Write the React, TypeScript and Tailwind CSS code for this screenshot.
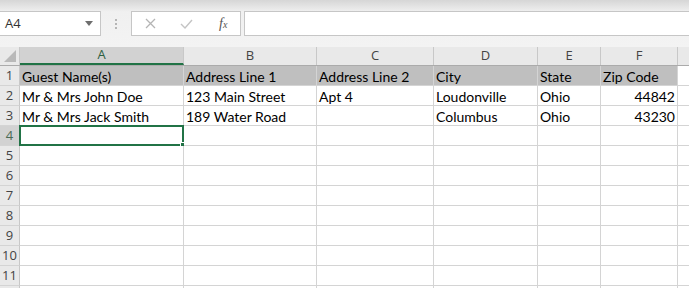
const cols = [
  { key: "A", w: "w-[164px]" },
  { key: "B", w: "w-[133px]" },
  { key: "C", w: "w-[117px]" },
  { key: "D", w: "w-[104px]" },
  { key: "E", w: "w-[63px]" },
  { key: "F", w: "w-[77px]" },
];

type Cell = { v: string; num?: boolean };

const data: Cell[][] = [
  [{ v: "Guest Name(s)" }, { v: "Address Line 1" }, { v: "Address Line 2" }, { v: "City" }, { v: "State" }, { v: "Zip Code" }],
  [{ v: "Mr & Mrs John Doe" }, { v: "123 Main Street" }, { v: "Apt 4" }, { v: "Loudonville" }, { v: "Ohio" }, { v: "44842", num: true }],
  [{ v: "Mr & Mrs Jack Smith" }, { v: "189 Water Road" }, { v: "" }, { v: "Columbus" }, { v: "Ohio" }, { v: "43230", num: true }],
];

function FormulaBar() {
  return (
    <div className="h-[47px] bg-gradient-to-b from-[#d6d6d6] via-[#f0f0f0] via-[25%] to-[#f3f3f3] flex flex-col">
      <div className="h-[11px]" />
      <div className="flex h-[25px] items-stretch">
        {/* name box */}
        <div className="w-[101px] bg-white border border-l-0 border-[#c6c6c6] flex items-center justify-between pl-[5px] pr-[7px]">
          <span className="text-[13px] text-[#333]" style={{ fontFamily: "'Open Sans', sans-serif" }}>A4</span>
          <svg width="8" height="5" viewBox="0 0 8 5"><path d="M0 0h8L4 5z" fill="#6e6e6e" /></svg>
        </div>
        <div className="w-[30px] flex flex-col items-center justify-center gap-[2px]">
          <span className="w-[2px] h-[2px] bg-[#b5b5b5]" />
          <span className="w-[2px] h-[2px] bg-[#b5b5b5]" />
          <span className="w-[2px] h-[2px] bg-[#b5b5b5]" />
        </div>
        {/* cancel / enter / fx */}
        <div className="w-[110px] bg-white border border-[#c6c6c6] flex items-center">
          <svg className="ml-[13px]" width="11" height="11" viewBox="0 0 11 11">
            <path d="M1 1l9 9M10 1l-9 9" stroke="#b4b4b4" strokeWidth="1.3" />
          </svg>
          <svg className="ml-[24px]" width="13" height="10" viewBox="0 0 13 10">
            <path d="M1 5l4 4L12 1" stroke="#c4c4c4" strokeWidth="1.4" fill="none" />
          </svg>
          <span
            className="ml-[26px] text-[14px] italic text-[#555] leading-none"
            style={{ fontFamily: "'Liberation Serif', serif" }}
          >
            f<span className="text-[10px]">x</span>
          </span>
        </div>
        <div className="w-[3px]" />
        <div className="flex-1 bg-white border border-r-0 border-[#c6c6c6]" />
      </div>
      <div className="flex-1" />
    </div>
  );
}

function Grid() {
  const rows = Array.from({ length: 11 }, (_, i) => i + 1);
  return (
    <div className="flex flex-col" style={{ fontFamily: "Lato, 'Open Sans', sans-serif" }}>
      {/* column headers */}
      <div className="flex h-[19px] bg-[#e9e9e9] border-b border-[#ababab]">
        <div className="w-[20px] border-r border-[#c8c8c8] relative">
          <svg className="absolute right-[3px] bottom-[3px]" width="12" height="12" viewBox="0 0 12 12">
            <path d="M12 0V12H0z" fill="#b9b9b9" />
          </svg>
        </div>
        {cols.map((c) => (
          <div
            key={c.key}
            className={`${c.w} shrink-0 flex items-center justify-center text-[13px] border-r border-[#c8c8c8] ${
              c.key === "A" ? "bg-[#d2d2d2] text-[#2d5f41] border-b-2 border-b-[#217346]" : "text-[#444]"
            }`}
            style={{ fontFamily: "'Open Sans', sans-serif" }}
          >
            {c.key}
          </div>
        ))}
        <div className="flex-1" />
      </div>
      {rows.map((r) => {
        const cells = data[r - 1];
        const sel = r === 4;
        return (
          <div key={r} className="flex h-[20px]">
            <div
              className={`w-[20px] shrink-0 flex items-center justify-center text-[13px] border-b border-[#d4d4d4] border-r ${
                sel ? "bg-[#d2d2d2] text-[#4a6b55] border-r-[#217346]" : "bg-[#e9e9e9] text-[#444] border-r-[#c8c8c8]"
              }`}
              style={{ fontFamily: "'Open Sans', sans-serif" }}
            >
              {r}
            </div>
            {cols.map((c, ci) => {
              const cell = cells?.[ci];
              return (
                <div
                  key={c.key}
                  className={`${c.w} shrink-0 relative flex items-center px-[2px] pt-px text-[14px] text-black border-r border-b border-[#d4d4d4] whitespace-nowrap ${
                    r === 1 ? "bg-[#bfbfbf]" : "bg-white"
                  } ${cell?.num ? "justify-end" : ""}`}
                >
                  {cell?.v}
                  {sel && ci === 0 && (
                    <div className="absolute -left-px -top-px -right-px -bottom-px border-2 border-[#217346]">
                      <div className="absolute -right-[4px] -bottom-[4px] w-[6px] h-[6px] bg-[#217346] border border-white" />
                    </div>
                  )}
                </div>
              );
            })}
            <div className="flex-1 border-b border-[#d4d4d4] bg-white" />
          </div>
        );
      })}
      {/* partial next row */}
      <div className="flex h-[4px]">
        <div className="w-[20px] shrink-0 bg-[#e9e9e9] border-r border-[#c8c8c8]" />
        {cols.map((c) => (
          <div key={c.key} className={`${c.w} shrink-0 border-r border-[#d4d4d4]`} />
        ))}
      </div>
    </div>
  );
}

export default function App() {
  return (
    <div className="w-[689px] h-[288px] overflow-hidden bg-white">
      <FormulaBar />
      <Grid />
    </div>
  );
}
